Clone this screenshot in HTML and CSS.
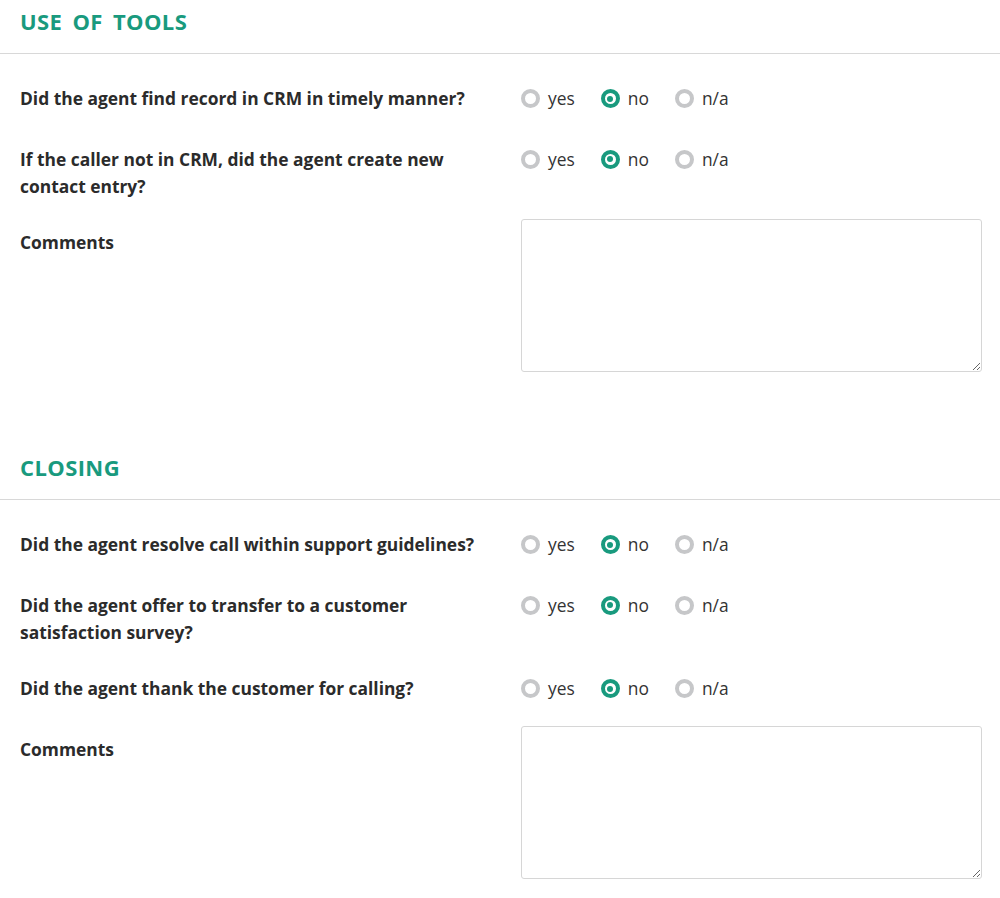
FILE: index.html
```html
<!DOCTYPE html>
<html lang="en">
<head>
<meta charset="utf-8">
<title>Call Evaluation</title>
<link rel="stylesheet" href="styles.css">
</head>
<body>
<section class="section">
  <h2 class="section-title">USE OF TOOLS</h2>
  <div class="rows">
    <div class="row">
      <div class="q">Did the agent find record in CRM in timely manner?</div>
      <div class="opts">
        <label class="opt"><input type="radio" name="q1"><span>yes</span></label>
        <label class="opt"><input type="radio" name="q1" checked><span>no</span></label>
        <label class="opt"><input type="radio" name="q1"><span>n/a</span></label>
      </div>
    </div>
    <div class="row">
      <div class="q">If the caller not in CRM, did the agent create new contact entry?</div>
      <div class="opts">
        <label class="opt"><input type="radio" name="q2"><span>yes</span></label>
        <label class="opt"><input type="radio" name="q2" checked><span>no</span></label>
        <label class="opt"><input type="radio" name="q2"><span>n/a</span></label>
      </div>
    </div>
    <div class="row row-comment">
      <div class="q q-comment">Comments</div>
      <textarea class="comment"></textarea>
    </div>
  </div>
</section>
<section class="section">
  <h2 class="section-title">CLOSING</h2>
  <div class="rows">
    <div class="row">
      <div class="q">Did the agent resolve call within support guidelines?</div>
      <div class="opts">
        <label class="opt"><input type="radio" name="q3"><span>yes</span></label>
        <label class="opt"><input type="radio" name="q3" checked><span>no</span></label>
        <label class="opt"><input type="radio" name="q3"><span>n/a</span></label>
      </div>
    </div>
    <div class="row">
      <div class="q">Did the agent offer to transfer to a customer satisfaction survey?</div>
      <div class="opts">
        <label class="opt"><input type="radio" name="q4"><span>yes</span></label>
        <label class="opt"><input type="radio" name="q4" checked><span>no</span></label>
        <label class="opt"><input type="radio" name="q4"><span>n/a</span></label>
      </div>
    </div>
    <div class="row">
      <div class="q">Did the agent thank the customer for calling?</div>
      <div class="opts">
        <label class="opt"><input type="radio" name="q5"><span>yes</span></label>
        <label class="opt"><input type="radio" name="q5" checked><span>no</span></label>
        <label class="opt"><input type="radio" name="q5"><span>n/a</span></label>
      </div>
    </div>
    <div class="row row-comment">
      <div class="q q-comment">Comments</div>
      <textarea class="comment"></textarea>
    </div>
  </div>
</section>
</body>
</html>
```
FILE: styles.css
```css
html, body {
  margin: 0;
  padding: 0;
  background: #ffffff;
}
body {
  font-family: "Open Sans", "Noto Sans", sans-serif;
  color: #2f2f2f;
  font-size: 17px;
}
.section {
  margin-bottom: 74px;
}
.section-title {
  margin: 0;
  padding: 6px 20px 17px;
  font-size: 22px;
  line-height: 30px;
  font-weight: 700;
  color: #199a7e;
  letter-spacing: 0.4px;
  word-spacing: 4px;
  border-bottom: 1px solid #d8d8d8;
}
.rows {
  padding: 31px 18px 0 20px;
}
.row {
  display: grid;
  grid-template-columns: 501px 461px;
  align-items: start;
  margin-bottom: 29.5px;
}
.row-comment {
  margin-top: -10px;
  margin-bottom: 0;
}
.q {
  font-weight: 700;
  font-size: 17.4px;
  line-height: 27px;
  color: #2b2b2b;
  padding-right: 20px;
}
.q-comment {
  padding-top: 10px;
}
.opts {
  display: flex;
  align-items: center;
  gap: 26px;
  height: 27px;
  padding-bottom: 4px;
}
.opt {
  display: flex;
  align-items: center;
  gap: 8px;
  font-size: 17.4px;
  line-height: 27px;
  color: #333333;
  cursor: pointer;
}
.opt input {
  appearance: none;
  -webkit-appearance: none;
  margin: 0;
  width: 19px;
  height: 19px;
  border-radius: 50%;
  border: 4px solid #c6c7c9;
  background: #ffffff;
  box-sizing: border-box;
  display: grid;
  place-items: center;
}
.opt input:checked {
  border-color: #199a7e;
}
.opt input:checked::after {
  content: "";
  width: 6px;
  height: 6px;
  border-radius: 50%;
  background: #199a7e;
}
.comment {
  display: block;
  box-sizing: border-box;
  width: 461px;
  height: 153px;
  margin: 0;
  border: 1px solid #d6d6d6;
  border-radius: 3px;
  background: #ffffff;
  font-family: inherit;
  font-size: 14px;
  padding: 6px 8px;
}
```
